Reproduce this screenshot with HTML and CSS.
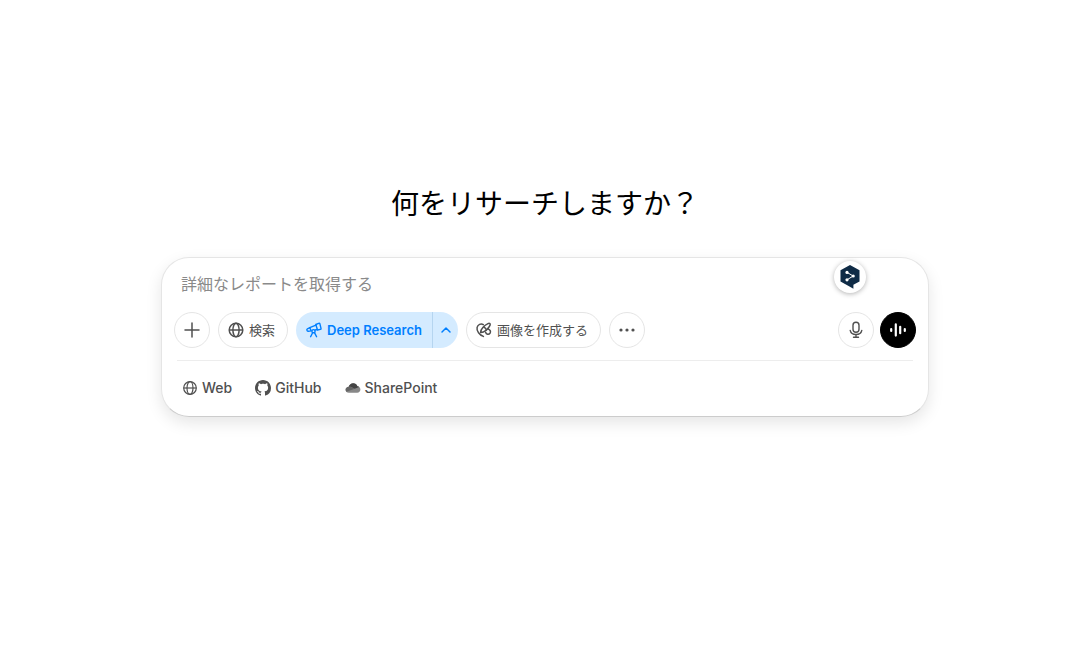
FILE: index.html
```html
<!DOCTYPE html>
<html lang="ja">
<head>
    <meta charset="UTF-8">
    <meta name="viewport" content="width=device-width, initial-scale=1.0">
    <title>Deep Research</title>
    <link rel="stylesheet" href="styles.css">
</head>
<body>
    <main>
        <h1>何をリサーチしますか？</h1>

        <form class="composer">
            <input type="text" class="prompt" placeholder="詳細なレポートを取得する" aria-label="詳細なレポートを取得する">

            <!-- Translator badge floating over the prompt -->
            <button type="button" class="translate-badge" aria-label="DeepL">
                <svg width="22" height="26" viewBox="0 0 22 26">
                    <path d="M11 1 20.5 6.2V17.4L14.4 20.7V24.8L9.6 22 1.5 17.4V6.2Z" fill="#0f2b46"/>
                    <path d="M8 8.4 14.2 12 8 15.8" fill="none" stroke="#fff" stroke-width="1"/>
                    <circle cx="8" cy="8.4" r="1.6" fill="#fff"/>
                    <circle cx="14.2" cy="12" r="1.6" fill="#fff"/>
                    <circle cx="8" cy="15.8" r="1.6" fill="#fff"/>
                </svg>
            </button>

            <div class="toolbar">
                <button type="button" class="round" aria-label="追加">
                    <svg width="18" height="18" viewBox="0 0 18 18" fill="none" stroke="currentColor" stroke-width="1.5" stroke-linecap="round">
                        <path d="M9 2v14M2 9h14"/>
                    </svg>
                </button>
                <button type="button" class="pill">
                    <svg width="18" height="18" viewBox="0 0 18 18" fill="none" stroke="currentColor" stroke-width="1.5">
                        <circle cx="9" cy="9" r="6.8"/>
                        <ellipse cx="9" cy="9" rx="3.1" ry="6.8"/>
                        <path d="M2.2 9h13.6"/>
                    </svg>
                    検索
                </button>
                <div class="split">
                    <button type="button" class="split-main">
                        <svg width="18" height="18" viewBox="0 0 18 18" fill="none" stroke="currentColor" stroke-width="1.4" stroke-linecap="round" stroke-linejoin="round">
                            <path d="M10.8 3.5 13.7 2.3Q14.6 2 14.9 2.8L16 7.3Q16.2 8.2 15.3 8.4L12.5 9Z"/>
                            <path d="M10.9 4.2 4.8 6.7M12.2 8.5 10.2 9"/>
                            <path d="M4.8 6.7 2.4 7.8Q1.6 8.3 1.9 9.2 2.2 10.4 3.2 10.3L6.2 9.9Z"/>
                            <circle cx="8.5" cy="10.2" r="1.6"/>
                            <path d="M7.6 11.7 5.6 15.7M9.5 11.6 11.6 15.7"/>
                        </svg>
                        Deep Research
                    </button>
                    <button type="button" class="split-toggle" aria-label="ソースを閉じる">
                        <svg width="12" height="12" viewBox="0 0 12 12" fill="none" stroke="currentColor" stroke-width="1.5" stroke-linecap="round" stroke-linejoin="round">
                            <path d="M2 8 6 4l4 4"/>
                        </svg>
                    </button>
                </div>
                <button type="button" class="pill">
                    <svg width="18" height="18" viewBox="0 0 18 18" fill="none" stroke="currentColor" stroke-width="1.5" stroke-linecap="round" stroke-linejoin="round">
                        <path d="M8.3 3.6C5.9 2.2 2.8 3.6 2.1 6.4 1.3 9.9 4.6 14 8.4 15.4"/>
                        <path d="M5.6 11.4C5.5 8.4 9.3 4.4 13 2.6 14.6 1.9 15.7 2.8 15 4.4 13.4 7.9 9 11.6 5.6 11.4Z"/>
                        <path d="M8.9 6.3C10.2 6.8 11.1 7.8 11.4 9"/>
                        <path d="M13 8C15.5 8.7 16 10.9 15 12.3 13.8 14 11.2 13.6 10.6 11.2"/>
                    </svg>
                    画像を作成する
                </button>
                <button type="button" class="round" aria-label="その他">
                    <svg width="18" height="18" viewBox="0 0 18 18" fill="currentColor">
                        <circle cx="3" cy="9" r="1.6"/>
                        <circle cx="9" cy="9" r="1.6"/>
                        <circle cx="15" cy="9" r="1.6"/>
                    </svg>
                </button>

                <div class="voice">
                    <button type="button" class="round" aria-label="音声入力">
                        <svg width="18" height="18" viewBox="0 0 18 18" fill="none" stroke="currentColor" stroke-width="1.4" stroke-linecap="round">
                            <rect x="6" y="1.3" width="6" height="10" rx="3"/>
                            <path d="M3.2 9.4C4.3 14.9 13.7 14.9 14.8 9.4M9 13.5V16.2M6.5 16.3h5"/>
                        </svg>
                    </button>
                    <button type="button" class="round round-dark" aria-label="音声モード">
                        <svg width="18" height="18" viewBox="0 0 18 18" fill="none" stroke="currentColor" stroke-width="2.2" stroke-linecap="round">
                            <path d="M2.2 8v2M6.8 3.4v11.2M11.2 5.8v6.4M15.8 8v2"/>
                        </svg>
                    </button>
                </div>
            </div>

            <div class="sources">
                <button type="button" class="source">
                    <svg width="16" height="16" viewBox="0 0 16 16" fill="none" stroke="currentColor" stroke-width="1.2">
                        <circle cx="8" cy="8" r="6.3"/>
                        <ellipse cx="8" cy="8" rx="3" ry="6.3"/>
                        <path d="M1.7 8h12.6"/>
                    </svg>
                    Web
                </button>
                <button type="button" class="source">
                    <svg width="16" height="16" viewBox="0 0 16 16" fill="currentColor">
                        <path d="M8 0C3.58 0 0 3.58 0 8c0 3.54 2.29 6.53 5.47 7.59.4.07.55-.17.55-.38 0-.19-.01-.82-.01-1.49-2.01.37-2.53-.49-2.69-.94-.09-.23-.48-.94-.82-1.13-.28-.15-.68-.52-.01-.53.63-.01 1.08.58 1.23.82.72 1.21 1.87.87 2.33.66.07-.52.28-.87.51-1.07-1.78-.2-3.64-.89-3.64-3.95 0-.87.31-1.59.82-2.15-.08-.2-.36-1.02.08-2.12 0 0 .67-.21 2.2.82.64-.18 1.32-.27 2-.27s1.36.09 2 .27c1.53-1.04 2.2-.82 2.2-.82.44 1.1.16 1.92.08 2.12.51.56.82 1.27.82 2.15 0 3.07-1.87 3.75-3.65 3.95.29.25.54.73.54 1.48 0 1.07-.01 1.93-.01 2.2 0 .21.15.46.55.38A8.01 8.01 0 0 0 16 8c0-4.42-3.58-8-8-8Z"/>
                    </svg>
                    GitHub
                </button>
                <button type="button" class="source">
                    <svg width="16" height="16" viewBox="0 0 16 16">
                        <path d="M3.8 12.8C1.9 12.8.6 11.5.6 9.8.6 8.1 2 6.9 3.7 6.8 4.4 4.6 6.2 3.3 8.2 3.3c2 0 3.6 1.2 4.2 3 1.7.2 3 1.5 3 3.2 0 1.8-1.4 3.3-3.2 3.3Z" fill="#888"/>
                        <path d="M3.7 6.8C4.4 4.6 6.2 3.3 8.2 3.3c2 0 3.6 1.2 4.2 3 .7.1 1.3.3 1.8.8L9.7 8.7 6.5 7.2C5.6 6.8 4.6 6.7 3.7 6.8Z" fill="#444"/>
                        <path d="M3.7 6.8c1-.1 1.9 0 2.8.4l3.2 1.5-8.2 3.1C.9 11.2.6 10.6.6 9.8.6 8.1 2 6.9 3.7 6.8Z" fill="#666"/>
                    </svg>
                    SharePoint
                </button>
            </div>
        </form>
    </main>
</body>
</html>
```

FILE: styles.css
```css
:root {
    --text: #0d0d0d;
    --muted: #505050;
    --placeholder: #8a8a8a;
    --line: #e5e5e5;
    --accent: #007fff;
    --accent-bg: #d4ebff;
}

* {
    margin: 0;
    padding: 0;
    box-sizing: border-box;
}

body {
    background-color: white;
    color: var(--text);
    font-family: Inter, "Noto Sans CJK JP", sans-serif;
}

main {
    min-height: 100vh;
    padding: 0 0 47px 3px;
    display: flex;
    flex-direction: column;
    align-items: center;
    justify-content: center;
}

h1 {
    margin-bottom: 35px;
    font-size: 28px;
    line-height: 36px;
    font-weight: 400;
    color: black;
}

button {
    border: none;
    background: none;
    color: var(--muted);
    font-family: inherit;
    font-size: 13px;
    line-height: 20px;
    cursor: pointer;
}

svg {
    display: block;
    flex-shrink: 0;
}

.composer {
    position: relative;
    width: 100%;
    max-width: 768px;
    padding: 14px 12px 12px;
    border: 1px solid var(--line);
    border-bottom-color: #ccc;
    border-radius: 28px;
    background-color: white;
    box-shadow: 0 6px 16px rgba(0, 0, 0, 0.1);
}

.prompt {
    display: block;
    width: 100%;
    height: 24px;
    margin-bottom: 16px;
    padding: 0 7px;
    border: none;
    outline: none;
    background: none;
    color: var(--text);
    font-family: inherit;
    font-size: 16px;
}

.prompt::placeholder {
    color: var(--placeholder);
    opacity: 1;
}

.translate-badge {
    position: absolute;
    top: 3px;
    right: 62px;
    display: flex;
    align-items: center;
    justify-content: center;
    width: 32px;
    height: 32px;
    border-radius: 50%;
    background-color: white;
    box-shadow: 0 1px 5px rgba(0, 0, 0, 0.3);
}

.toolbar {
    display: flex;
    align-items: center;
    gap: 8px;
}

.round,
.pill {
    display: flex;
    align-items: center;
    justify-content: center;
    height: 36px;
    border: 1px solid var(--line);
    border-radius: 18px;
}

.round {
    width: 36px;
}

.round-dark {
    border-color: black;
    background-color: black;
    color: white;
}

.pill {
    gap: 4px;
    padding: 0 12px 0 8px;
}

.split {
    display: flex;
    height: 36px;
    border-radius: 18px;
    background-color: var(--accent-bg);
}

.split button {
    display: flex;
    align-items: center;
    color: var(--accent);
}

.split .split-main {
    gap: 4px;
    padding: 0 10px 0 9px;
    font-weight: 600;
}

.split .split-toggle {
    justify-content: center;
    width: 26px;
    border-left: 1px solid #b5d5f0;
}

.voice {
    display: flex;
    gap: 6px;
    margin-left: auto;
}

.sources {
    display: flex;
    gap: 23px;
    margin: 12px 3px 0;
    padding: 17px 5px 6px;
    border-top: 1px solid #ededed;
}

.source {
    display: flex;
    align-items: center;
    gap: 4px;
    font-size: 14px;
    font-weight: 500;
}
```
